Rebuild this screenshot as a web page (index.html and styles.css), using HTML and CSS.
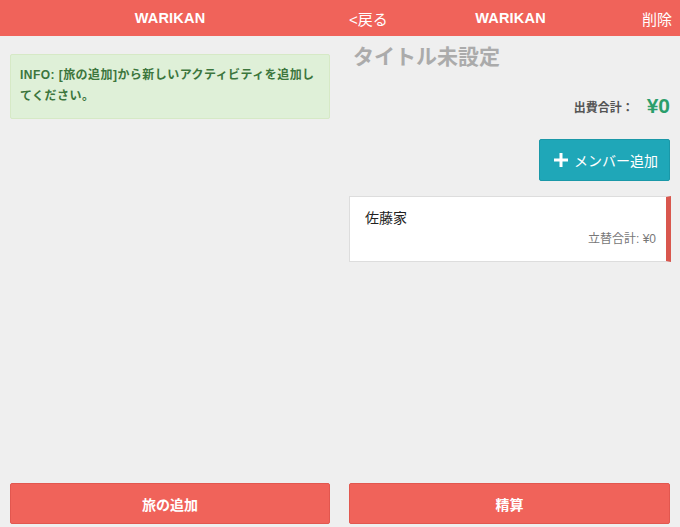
FILE: index.html
```html
<!DOCTYPE html>
<html lang="ja">
<head>
<meta charset="utf-8">
<title>WARIKAN</title>
<link rel="stylesheet" href="styles.css">
</head>
<body>
<div class="app">
  <section class="pane pane-left">
    <header class="bar">
      <span class="bar-title">WARIKAN</span>
    </header>
    <div class="info">INFO: [旅の追加]から新しいアクティビティを追加してください。</div>
    <div class="footer">
      <button class="btn-red">旅の追加</button>
    </div>
  </section>
  <section class="pane pane-right">
    <header class="bar bar-split">
      <span class="bar-side">&lt;戻る</span>
      <span class="bar-title">WARIKAN</span>
      <span class="bar-side bar-side-right">削除</span>
    </header>
    <div class="content">
      <h1 class="trip-title">タイトル未設定</h1>
      <div class="total">
        <span class="total-label">出費合計：</span>
        <span class="total-value">¥0</span>
      </div>
      <div class="actions">
        <button class="btn-teal">
          <svg class="plus" width="16" height="16" viewBox="0 0 16 16"><path d="M8 1v14M1 8h14" stroke="#fff" stroke-width="3" fill="none"/></svg>
          <span>メンバー追加</span>
        </button>
      </div>
      <div class="member">
        <div class="member-name">佐藤家</div>
        <div class="member-sum">立替合計: ¥0</div>
      </div>
    </div>
    <div class="footer footer-right">
      <button class="btn-red">精算</button>
    </div>
  </section>
</div>
</body>
</html>
```
FILE: styles.css
```css
* { box-sizing: border-box; }
html, body { margin: 0; padding: 0; }
body {
  background: #efefef;
  font-family: "Liberation Sans", "Noto Sans CJK JP", sans-serif;
  width: 680px;
  height: 527px;
  overflow: hidden;
}
.app {
  display: flex;
  width: 680px;
  height: 527px;
}
.pane {
  width: 340px;
  display: flex;
  flex-direction: column;
  height: 527px;
}
.bar {
  height: 36px;
  background: #f0635a;
  color: #fff;
  display: flex;
  align-items: center;
  justify-content: center;
  flex-shrink: 0;
}
.bar-title {
  font-weight: bold;
  font-size: 14.5px;
  letter-spacing: 0.2px;
}
.bar-split {
  justify-content: space-between;
  padding: 0 8px 0 9px;
}
.bar-side {
  font-size: 15px;
  width: 50px;
}
.bar-side-right { text-align: right; }
.info {
  margin: 18px 10px 0 10px;
  background: #dff0d8;
  border: 1px solid #d6e9c6;
  border-radius: 2px;
  color: #3c763d;
  font-weight: bold;
  font-size: 12px;
  letter-spacing: 0.45px;
  line-height: 21px;
  padding: 10px 8px 11px 9px;
}
.footer {
  margin-top: auto;
  padding: 0 10px 3px 10px;
}
.footer-right { padding-left: 9px; }
.btn-red {
  display: block;
  width: 100%;
  height: 41px;
  border: 1px solid #e2574f;
  border-radius: 2px;
  background: #f0635a;
  color: #fff;
  font-family: "Liberation Sans", "Noto Sans CJK JP", sans-serif;
  font-size: 14px;
  font-weight: bold;
  padding: 0;
}
.content {
  padding: 0 10px 0 9px;
}
.trip-title {
  margin: 7px 0 0 4px;
  font-size: 21px;
  line-height: 28px;
  font-weight: bold;
  color: #ababab;
}
.total {
  display: flex;
  justify-content: flex-end;
  align-items: center;
  margin-top: 20px;
  height: 30px;
}
.total-label {
  font-size: 12px;
  font-weight: bold;
  color: #555;
  margin-right: 13px;
}
.total-value {
  font-size: 21px;
  font-weight: bold;
  color: #2a9e6b;
}
.actions {
  display: flex;
  justify-content: flex-end;
  margin-top: 18px;
}
.btn-teal {
  width: 131px;
  height: 42px;
  background: #1fa7b8;
  border: 1px solid #1a98a8;
  border-radius: 2px;
  color: #fff;
  display: flex;
  align-items: center;
  justify-content: center;
  gap: 5px;
  font-family: "Liberation Sans", "Noto Sans CJK JP", sans-serif;
  font-size: 14px;
  padding: 0 0 0 2px;
}
.member {
  margin-top: 15px;
  background: #fff;
  border: 1px solid #dddddd;
  border-right: 5px solid #d9574e;
  height: 66px;
  padding: 11px 10px 0 15px;
  width: 322px;
}
.member-name {
  font-size: 14px;
  line-height: 20px;
  color: #222;
}
.member-sum {
  text-align: right;
  font-size: 12px;
  line-height: 18px;
  color: #777;
  margin-top: 2px;
}
```
